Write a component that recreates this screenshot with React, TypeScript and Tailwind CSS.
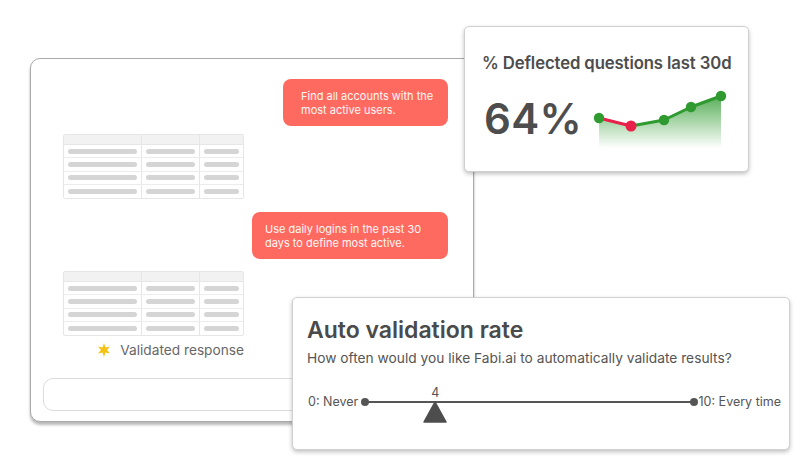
import React from "react";

const font = { fontFamily: "Inter, 'Noto Sans', sans-serif" };

function MiniTable() {
  const rows = [0, 1, 2, 3];
  return (
    <div className="w-[181px] border border-[#e6e6e6] rounded-[2px] overflow-hidden bg-white">
      <div className="grid grid-cols-[78px_58px_1fr] h-[10px] bg-[#f2f2f2] border-b border-[#e6e6e6]">
        <div className="border-r border-[#e6e6e6]" />
        <div className="border-r border-[#e6e6e6]" />
        <div />
      </div>
      {rows.map((r) => (
        <div
          key={r}
          className="grid grid-cols-[78px_58px_1fr] h-[13.25px] border-b border-[#ececec] last:border-b-0"
        >
          <div className="border-r border-[#e6e6e6] flex items-center px-[4px]">
            <div className="h-[5px] w-full rounded-full bg-[#d5d5d5]" />
          </div>
          <div className="border-r border-[#e6e6e6] flex items-center px-[4px]">
            <div className="h-[5px] w-full rounded-full bg-[#d5d5d5]" />
          </div>
          <div className="flex items-center px-[4px]">
            <div className="h-[5px] w-full rounded-full bg-[#d5d5d5]" />
          </div>
        </div>
      ))}
    </div>
  );
}

function Star() {
  const pts: string[] = [];
  for (let i = 0; i < 12; i++) {
    const a = (Math.PI / 6) * i - Math.PI / 2;
    const r = i % 2 === 0 ? 7 : 3;
    pts.push(`${(7 + r * Math.cos(a)).toFixed(2)},${(7 + r * Math.sin(a)).toFixed(2)}`);
  }
  return (
    <svg width="14" height="14" viewBox="0 0 14 14">
      <polygon points={pts.join(" ")} fill="#f5c211" />
    </svg>
  );
}

function Chart() {
  const pts: [number, number][] = [
    [7, 28],
    [39, 36],
    [72, 30],
    [99, 17],
    [129, 6],
  ];
  const area = `M7,28 L39,36 L72,30 L99,17 L129,6 L129,58 L7,58 Z`;
  return (
    <svg width="136" height="60" viewBox="0 0 136 60">
      <defs>
        <linearGradient id="g" x1="0" y1="0" x2="0" y2="1">
          <stop offset="0" stopColor="#2f9a2f" stopOpacity="0.8" />
          <stop offset="1" stopColor="#2f9a2f" stopOpacity="0" />
        </linearGradient>
      </defs>
      <path d={area} fill="url(#g)" />
      <polyline points="39,36 72,30 99,17 129,6" fill="none" stroke="#2f9a2f" strokeWidth="3" strokeLinejoin="round" />
      <line x1="7" y1="28" x2="39" y2="36" stroke="#e8204a" strokeWidth="3" />
      {pts.map(([x, y], i) => (
        <circle key={i} cx={x} cy={y} r={i === 1 ? 5.5 : 5.2} fill={i === 1 ? "#e8204a" : "#2f9a2f"} />
      ))}
    </svg>
  );
}

export default function App() {
  return (
    <div className="relative w-[800px] h-[474px] bg-white overflow-hidden" style={font}>
      {/* Main chat panel */}
      <div className="ml-[30px] mt-[58px] w-[444px] h-[364px] rounded-[10px] border border-[#a9a9a9] bg-white shadow-[0_3px_3px_rgba(0,0,0,0.28)] flex flex-col px-[12px] pt-[20px]">
        <div className="flex justify-end pr-[13px]">
          <div className="w-[165px] h-[47px] rounded-[8px] bg-[#ff6a60] text-[#fff7f5] text-[11px] leading-[14px] pl-[18px] pr-[8px] flex items-center">
            Find all accounts with the most active users.
          </div>
        </div>
        <div className="pl-[20px] mt-[8px]">
          <MiniTable />
        </div>
        <div className="flex justify-end pr-[13px] mt-[13px]">
          <div className="w-[196px] h-[47px] rounded-[8px] bg-[#ff6a60] text-[#fff7f5] text-[11px] leading-[14px] pl-[13px] pr-[10px] flex items-center">
            Use daily logins in the past 30 days to define most active.
          </div>
        </div>
        <div className="pl-[20px] mt-[12px] flex flex-col items-start">
          <MiniTable />
          <div className="w-[181px] flex justify-end items-center gap-[9px] mt-[4px] text-[13.7px] leading-[20px] text-[#666666]">
            <Star />
            <span>Validated response</span>
          </div>
        </div>
        <div className="mt-[18px] h-[33px] w-full rounded-[10px] border border-[#dcdcdc]" />
      </div>

      {/* Deflected questions card */}
      <div className="absolute left-[464px] top-[26px] w-[285px] h-[146px] rounded-[5px] border border-[#d0d0d0] bg-white shadow-[0_2px_4px_rgba(0,0,0,0.25)] pl-[19px] pt-[25px]">
        <div className="ml-[-2px] text-[16.7px] font-semibold text-[#4d4d4d] leading-[22px] tracking-[-0.1px]">
          % Deflected questions last 30d
        </div>
        <div className="flex items-start mt-[20px]">
          <div className="w-[108px] text-[42px] font-semibold text-[#4d4d4d] leading-[50px] tracking-[0.3px]">64%</div>
          <div className="mt-[-4px]">
            <Chart />
          </div>
        </div>
      </div>

      {/* Auto validation card */}
      <div className="absolute left-[292px] top-[297px] w-[498px] h-[153px] rounded-[5px] border border-[#d0d0d0] bg-white shadow-[0_2px_4px_rgba(0,0,0,0.25)] pl-[14px] pr-[8px] pt-[18px]">
        <div className="text-[23px] font-semibold text-[#4a4a4a] leading-[28px]">Auto validation rate</div>
        <div className="text-[13.75px] text-[#555555] leading-[18px] mt-[5px]">
          How often would you like Fabi.ai to automatically validate results?
        </div>
        <div className="flex items-center mt-[27px] text-[12.5px] leading-[16px] text-[#555555]">
          <span className="ml-[1px]">0: Never</span>
          <div className="relative flex-1 h-[8px] ml-[3px] mr-[1px]">
            <div className="absolute left-0 top-0 w-[8px] h-[8px] rounded-full bg-[#555555]" />
            <div className="absolute left-[4px] right-[4px] top-[3.25px] h-[1.5px] bg-[#555555]" />
            <div className="absolute right-0 top-0 w-[8px] h-[8px] rounded-full bg-[#555555]" />
            <span className="absolute left-[68px] top-[-12px] w-[12px] text-center text-[12.5px] leading-[14px]">4</span>
            <svg width="24" height="22" viewBox="0 0 24 22" className="absolute left-[62px] top-[3px]">
              <path d="M12 1 L23 21 L1 21 Z" fill="#4d4d4d" stroke="#4d4d4d" strokeWidth="1.5" strokeLinejoin="round" />
            </svg>
          </div>
          <span>10: Every time</span>
        </div>
      </div>
    </div>
  );
}
